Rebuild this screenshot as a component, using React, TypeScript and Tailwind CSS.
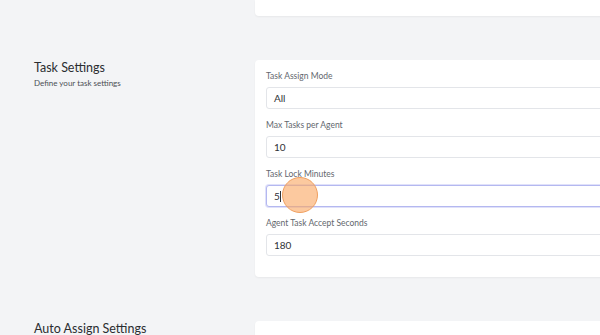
import React from "react";

const fields = [
  { label: "Task Assign Mode", value: "All" },
  { label: "Max Tasks per Agent", value: "10" },
  { label: "Task Lock Minutes", value: "5", focused: true },
  { label: "Agent Task Accept Seconds", value: "180" },
];

function Field({ label, value, focused }: { label: string; value: string; focused?: boolean }) {
  return (
    <div className="flex flex-col">
      <label className="text-[8.5px] leading-[11px] text-[#63676e]">{label}</label>
      <div
        className={
          "mt-[5px] h-[22px] flex items-center px-[7px] text-[10px] text-[#2f3237] bg-white rounded-[3px] border " +
          (focused ? "border-[#b4b8f0] shadow-[0_0_0_1px_rgba(165,170,240,0.35)]" : "border-[#e3e5e9]")
        }
      >
        {value}
        {focused && <span className="ml-[0.5px] w-px h-[11px] bg-[#2f3237]" />}
      </div>
    </div>
  );
}

export default function App() {
  return (
    <div
      className="relative w-[600px] h-[335px] overflow-hidden bg-[#f3f4f6]"
      style={{ fontFamily: "Lato, 'Noto Sans', sans-serif" }}
    >
      <div className="w-[640px]">
        {/* previous section card */}
        <div className="flex">
          <div className="w-[255px]" />
          <div className="flex-1 h-[16px] bg-white rounded-b-[4px] shadow-[0_1px_2px_rgba(0,0,0,0.05)]" />
        </div>

        {/* task settings */}
        <div className="flex mt-[44px]">
          <div className="w-[255px] pl-[34px]">
            <h2 className="text-[12.5px] leading-[16px] text-[#2a2d31]">Task Settings</h2>
            <p className="mt-[2px] text-[8px] leading-[11px] text-[#4b4f55]">Define your task settings</p>
          </div>
          <div className="flex-1 bg-white rounded-[4px] shadow-[0_1px_2px_rgba(0,0,0,0.05)] px-[11px] pt-[11px] pb-[21px] flex flex-col gap-[11px]">
            {fields.map((f) => (
              <Field key={f.label} {...f} />
            ))}
          </div>
        </div>

        {/* auto assign settings */}
        <div className="flex mt-[44px]">
          <div className="w-[255px] pl-[34px]">
            <h2 className="text-[12.5px] leading-[16px] text-[#2a2d31]">Auto Assign Settings</h2>
          </div>
          <div className="flex-1 h-[60px] bg-white rounded-[4px] shadow-[0_1px_2px_rgba(0,0,0,0.05)] pl-[11px] pt-[11px]">
            <label className="text-[8.5px] leading-[11px] text-[#63676e]">Auto Assign Mode</label>
          </div>
        </div>
      </div>

      {/* click highlight */}
      <div className="absolute left-[282px] top-[177px] w-[36px] h-[36px] rounded-full bg-[rgba(250,165,95,0.6)] border border-[#f0a060]" />
    </div>
  );
}
